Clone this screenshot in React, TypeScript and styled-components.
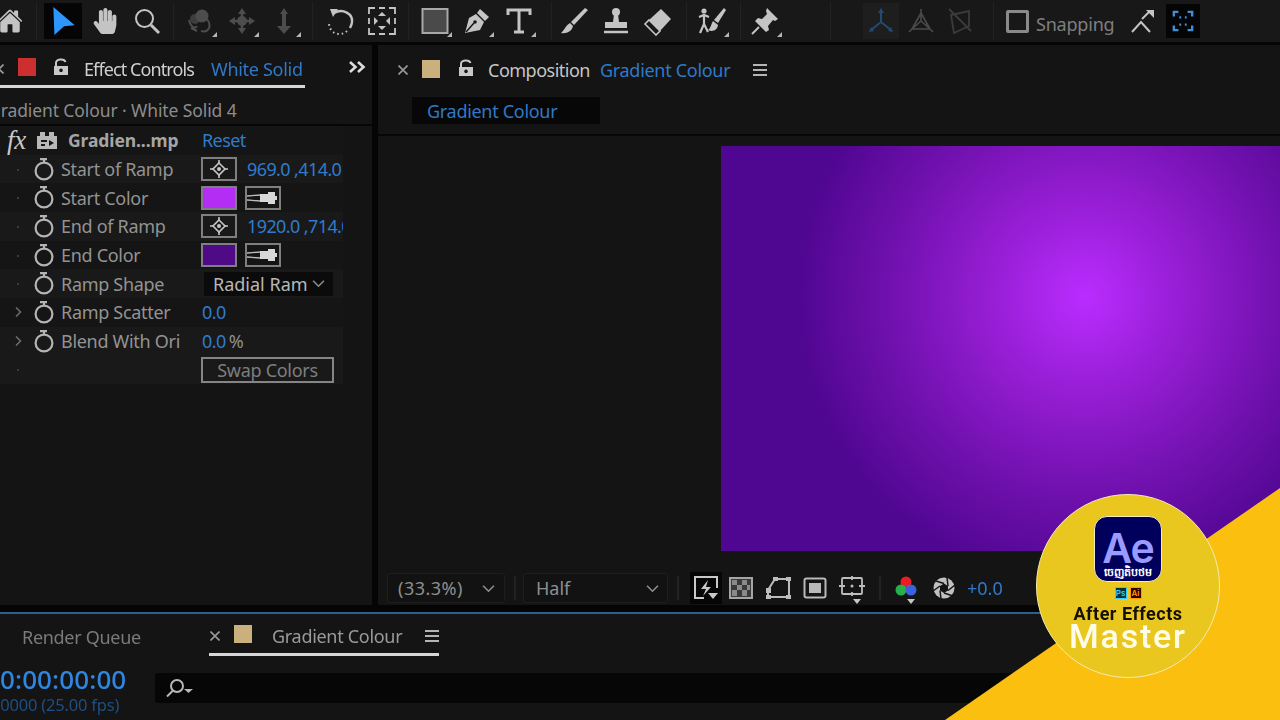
import React, {FC} from 'react';
import styled, {createGlobalStyle} from "styled-components";
import {FaHandPaper} from "react-icons/fa";
import {IoHome} from "react-icons/io5";

const GlobalStyle = createGlobalStyle`
  html, body {
    margin: 0;
    padding: 0;
    background: #050505;
  }
`

const Root = styled.div`
  position: relative;
  width: 1280px;
  height: 720px;
  overflow: hidden;
  background: #050505;
  font-family: "Noto Sans", "Open Sans", sans-serif;
`

const Workspace = styled.div`
  width: 1280px;
  height: 720px;
  display: flex;
  flex-direction: column;
  filter: blur(0.6px);
`

const Toolbar = styled.div`
  height: 42px;
  margin-bottom: 3px;
  flex-shrink: 0;
  display: flex;
  align-items: center;
  background: #181818;
  color: #bdbdbd;
`

const Group = styled.div<{$w: number, $pad?: number, $last?: boolean}>`
  width: ${props => props.$w}px;
  height: 38px;
  flex-shrink: 0;
  display: flex;
  align-items: center;
  box-sizing: border-box;
  padding-left: ${props => props.$pad ?? 0}px;
  border-right: ${props => props.$last ? "none" : "1px solid #222222"};
`

const Tool = styled.div<{$w?: number, $fill?: string, $dim?: boolean}>`
  position: relative;
  width: ${props => props.$w ?? 42}px;
  height: 36px;
  flex-shrink: 0;
  box-sizing: border-box;
  padding: 0 2px;
  display: flex;
  align-items: center;
  justify-content: center;
  background-clip: content-box;
  background-color: ${props => props.$fill ?? "transparent"};
  color: ${props => props.$dim ? "#4d4d4d" : "#c4c4c4"};

  svg {
    flex-shrink: 0;
  }
`

const Corner = styled.span`
  position: absolute;
  right: 4px;
  bottom: 2px;
  width: 5px;
  height: 5px;
  background: #b5b5b5;
  clip-path: polygon(100% 0, 100% 100%, 0 100%);
`

const SnapBox = styled.span`
  width: 23px;
  height: 23px;
  margin: 0 7px 0 12px;
  box-sizing: border-box;
  border: 3px solid #8a8a8a;
  border-radius: 2px;
  flex-shrink: 0;
`

const SnapText = styled.span`
  font-size: 18px;
  width: 92px;
  padding-top: 5px;
  letter-spacing: -0.2px;
  color: #7f7f7f;
`

const FocusBox = styled.div`
  width: 34px;
  height: 34px;
  margin-left: 10px;
  display: flex;
  align-items: center;
  justify-content: center;
  background: #050505;
  color: #3f8ed8;
`

const Main = styled.div`
  height: 560px;
  flex-shrink: 0;
  display: flex;
  gap: 6px;
`

const EffectPanel = styled.div`
  width: 372px;
  flex-shrink: 0;
  overflow: hidden;
  background: #141414;
`

const PanelHead = styled.div`
  position: relative;
`

const TabBar = styled.div`
  height: 43px;
  width: 305px;
  padding-top: 7px;
  display: flex;
  align-items: center;
  box-sizing: border-box;
  border-bottom: 3px solid #d6d6d6;
  font-size: 18px;
  white-space: nowrap;
  color: #d0d0d0;
`

const TabTitle = styled.span`
  letter-spacing: -0.9px;
`

const More = styled.span`
  position: absolute;
  right: 6px;
  top: 15px;
  color: #dcdcdc;
  display: flex;
`

const CloseMark = styled.svg<{$x?: number}>`
  width: 10px;
  height: 10px;
  flex-shrink: 0;
  margin-left: ${props => props.$x ?? 0}px;
  stroke: #9a9a9a;
  stroke-width: 1.6;
`

const Swatch = styled.span<{$bg: string, $x: number, $y?: number}>`
  width: 18px;
  height: 18px;
  flex-shrink: 0;
  margin-left: ${props => props.$x}px;
  margin-top: ${props => props.$y ?? 0}px;
  background: ${props => props.$bg};
`

const LockWrap = styled.span<{$x: number, $w: number}>`
  width: ${props => props.$w}px;
  margin-left: ${props => props.$x}px;
  margin-top: -4px;
  flex-shrink: 0;
  display: flex;
  color: #c8c8c8;
`

const Blue = styled.span<{$x?: number}>`
  margin-left: ${props => props.$x ?? 0}px;
  letter-spacing: -0.3px;
  color: #2f79c8;
`

const Crumb = styled.div`
  height: 38px;
  box-sizing: border-box;
  padding: 10px 0 0 0;
  border-bottom: 2px solid #060606;
  font-size: 17.5px;
  letter-spacing: -0.1px;
  line-height: 24px;
  white-space: nowrap;
  color: #8c8c8c;
  text-indent: -12px;
`

const Rows = styled.div`
  width: 343px;
`

const Row = styled.div<{$odd?: boolean}>`
  display: grid;
  grid-template-columns: 34px 27px 140px 142px;
  height: 28.7px;
  align-items: center;
  background: ${props => props.$odd ? "#191919" : "#151515"};
  font-size: 18px;
  letter-spacing: -0.3px;
  white-space: nowrap;
  color: #939393;
`

const Twirl = styled.span`
  display: flex;
  justify-content: center;
  padding-left: 1px;
  color: #6f6f6f;
`

const Dot = styled.span`
  width: 2px;
  height: 2px;
  margin-top: 1px;
  background: #3a3a3a;
`

const Watch = styled.span`
  display: flex;
  color: #b4b4b4;
`

const Label = styled.span`
  overflow: hidden;
`

const EffectName = styled.span`
  grid-column: 3;
  font-size: 17.5px;
  font-weight: 700;
  letter-spacing: -0.1px;
  color: #a5a5a5;
  margin-left: 7px;
`

const FxCell = styled.span`
  grid-column: 1 / span 2;
  display: flex;
  align-items: center;
  padding-left: 7px;
  gap: 8px;
  color: #b8b8b8;
`

const FxText = styled.span`
  font-family: "Liberation Serif", serif;
  font-style: italic;
  font-size: 27px;
  line-height: 27px;
  width: 21px;
  color: #c8c8c8;
`

const ValueCell = styled.div`
  display: flex;
  align-items: center;
  overflow: hidden;
  gap: 8px;
`

const IconBox = styled.span<{$bg?: string}>`
  width: 36px;
  height: 24px;
  flex-shrink: 0;
  box-sizing: border-box;
  display: flex;
  align-items: center;
  justify-content: center;
  border: 2px solid #7f7f7f;
  background: ${props => props.$bg ?? "transparent"};
  color: #c6c6c6;
`

const Num = styled.span<{$x?: number}>`
  margin-left: ${props => props.$x ?? 1}px;
  margin-top: -1px;
  letter-spacing: -0.6px;
  color: #2f7ccc;
`

const Suffix = styled.span`
  margin-left: -5px;
  color: #8f8f8f;
`

const Dropdown = styled.div`
  width: 129px;
  height: 24px;
  margin-left: 3px;
  box-sizing: border-box;
  padding-left: 9px;
  display: flex;
  align-items: center;
  gap: 4px;
  letter-spacing: 0;
  background: #0b0b0b;
  color: #b8b8b8;

  svg {
    color: #8a8a8a;
  }
`

const SwapButton = styled.div`
  width: 133px;
  height: 26px;
  box-sizing: border-box;
  border: 2px solid #858585;
  display: flex;
  align-items: center;
  justify-content: center;
  font-size: 18px;
  color: #7e7e7e;
`

const Viewer = styled.div`
  flex: 1;
  display: flex;
  flex-direction: column;
  background: #141414;
`

const ViewerHead = styled.div`
  height: 50px;
  flex-shrink: 0;
  display: flex;
  align-items: center;
  font-size: 18px;
  letter-spacing: -0.5px;
  white-space: nowrap;
  color: #c6c6c6;
`

const MenuIcon = styled.svg<{$x: number}>`
  width: 14px;
  height: 12px;
  margin-left: ${props => props.$x}px;
  flex-shrink: 0;
  stroke: #b5b5b5;
  stroke-width: 2;
`

const SubTabs = styled.div`
  height: 41px;
  flex-shrink: 0;
  box-sizing: border-box;
  border-bottom: 2px solid #060606;
  padding-left: 34px;
`

const SubTab = styled.div`
  width: 188px;
  height: 27px;
  margin-top: 2px;
  box-sizing: border-box;
  padding-left: 15px;
  background: #070707;
  font-size: 18px;
  letter-spacing: -0.3px;
  line-height: 29px;
  color: #2f79c8;
`

const Stage = styled.div`
  height: 430px;
  flex-shrink: 0;
  box-sizing: border-box;
  padding: 10px 0 0 343px;
`

const Canvas = styled.div`
  width: 559px;
  height: 405px;
  background: radial-gradient(circle 290px at 364px 151px, #b92dff 0%, #9a1fd8 30%, #7412b2 64%, #4f0690 100%);
`

const ViewerBar = styled.div`
  height: 39px;
  flex-shrink: 0;
  box-sizing: border-box;
  display: flex;
  align-items: center;
  padding: 5px 0 0 9px;
  color: #b5b5b5;
`

const Select = styled.div<{$w: number, $pad: number, $track?: number, $end: number}>`
  width: ${props => props.$w}px;
  height: 30px;
  flex-shrink: 0;
  box-sizing: border-box;
  padding: 0 ${props => props.$end}px 0 ${props => props.$pad}px;
  display: flex;
  align-items: center;
  justify-content: space-between;
  border-radius: 3px;
  border: 1px solid #1e1e1e;
  background: #121212;
  font-size: 18px;
  letter-spacing: ${props => props.$track ?? 0}px;
  color: #8f8f8f;
`

const BarTool = styled.div<{$w: number, $active?: boolean}>`
  position: relative;
  width: ${props => props.$w}px;
  height: 32px;
  flex-shrink: 0;
  display: flex;
  align-items: center;
  justify-content: center;
  background: ${props => props.$active ? "#060606" : "transparent"};
`

const BarSep = styled.span<{$x: number, $r: number}>`
  width: 2px;
  height: 24px;
  flex-shrink: 0;
  margin: 0 ${props => props.$r}px 0 ${props => props.$x}px;
  background: #222222;
`

const DownMark = styled.span`
  position: absolute;
  left: 50%;
  bottom: 0;
  margin-left: 1px;
  width: 8px;
  height: 5px;
  background: #c5c5c5;
  clip-path: polygon(0 0, 100% 0, 50% 100%);
`

const Exposure = styled.span`
  font-size: 18px;
  color: #2f79c8;
`

const BlueLine = styled.div`
  height: 2px;
  margin-top: 7px;
  flex-shrink: 0;
  background: #2f5f92;
`

const Timeline = styled.div`
  flex: 1;
  background: #141414;
  overflow: hidden;
`

const TimelineTabs = styled.div`
  height: 42px;
  display: flex;
  align-items: center;
  font-size: 18px;
  letter-spacing: -0.3px;
  white-space: nowrap;
  color: #8f8f8f;
`

const QueueLabel = styled.span`
  margin-left: 22px;
  margin-top: 4px;
  width: 187px;
  flex-shrink: 0;
  color: #7a7a7a;
`

const CompTab = styled.div`
  width: 230px;
  height: 42px;
  flex-shrink: 0;
  box-sizing: border-box;
  padding-top: 4px;
  display: flex;
  align-items: center;
  border-bottom: 3px solid #d6d6d6;
`

const CompTitle = styled.span`
  margin-left: 20px;
  color: #9a9a9a;
`

const TimeRow = styled.div`
  display: flex;
  align-items: flex-start;
  padding-top: 8px;
`

const TimeColumn = styled.div`
  width: 155px;
  flex-shrink: 0;
  overflow: hidden;
`

const TimeCode = styled.div`
  font-size: 26px;
  font-weight: 500;
  line-height: 30px;
  letter-spacing: 0.1px;
  color: #2f86e0;
`

const Fps = styled.div`
  font-size: 16.5px;
  line-height: 22px;
  margin-left: -9px;
  letter-spacing: -0.2px;
  white-space: nowrap;
  color: #1f4f82;
`

const Search = styled.div`
  flex: 1;
  height: 30px;
  margin-top: 9px;
  box-sizing: border-box;
  padding-left: 10px;
  display: flex;
  align-items: center;
  border-radius: 3px;
  background: #060606;
  color: #b8b8b8;
`

const YellowCorner = styled.div`
  position: absolute;
  left: 945px;
  top: 488px;
  width: 335px;
  height: 232px;
  background: #fbbf10;
  clip-path: polygon(0 100%, 100% 0, 100% 100%);
`

const Badge = styled.div`
  position: absolute;
  left: 1036px;
  top: 494px;
  width: 184px;
  height: 184px;
  box-sizing: border-box;
  padding-top: 21px;
  border-radius: 50%;
  border: 1px solid #f5ecb0;
  background: #eac71e;
  display: flex;
  flex-direction: column;
  align-items: center;
`

const AeTile = styled.div`
  width: 68px;
  height: 66px;
  box-sizing: border-box;
  padding-top: 14px;
  border: 1px solid #f2ecc0;
  border-radius: 13px;
  background: #00005c;
  display: flex;
  flex-direction: column;
  align-items: center;
`

const AeText = styled.span`
  font-family: "Inter", sans-serif;
  font-size: 41px;
  font-weight: 600;
  line-height: 34px;
  letter-spacing: -1px;
  color: #9a9aff;
`

const KhmerText = styled.span`
  font-family: "Noto Sans", "DejaVu Sans", sans-serif;
  font-size: 11px;
  font-weight: 700;
  line-height: 13px;
  white-space: nowrap;
  color: #ffffff;
`

const MiniRow = styled.div`
  display: flex;
  gap: 3px;
  margin-top: 5px;
`

const MiniTile = styled.span<{$bg: string, $fg: string}>`
  width: 12px;
  height: 12px;
  box-sizing: border-box;
  border: 1px solid ${props => props.$fg};
  background: ${props => props.$bg};
  color: ${props => props.$fg};
  font-family: "Inter", sans-serif;
  font-size: 8px;
  line-height: 10px;
  font-weight: 600;
  text-align: center;
  overflow: hidden;
`

const BadgeTitle = styled.span`
  font-family: "Roboto", "Inter", sans-serif;
  margin-top: 5px;
  font-size: 18px;
  line-height: 20px;
  font-weight: 700;
  letter-spacing: 0.5px;
  white-space: nowrap;
  color: #141008;
`

const BadgeMaster = styled.span`
  font-family: "Roboto", "Inter", sans-serif;
  font-size: 34px;
  line-height: 24px;
  font-weight: 500;
  letter-spacing: 1.8px;
  color: #fffde8;
`

type IconProps = {size?: number}

const Svg: FC<IconProps & {children: React.ReactNode, box?: number}> = ({size = 28, box = 28, children}) => (
    <svg width={size} height={size} viewBox={`0 0 ${box} ${box}`} fill="none" stroke="currentColor"
         strokeWidth={2} aria-hidden="true">
        {children}
    </svg>
);

const Arrow = () => (
    <Svg size={30} box={28}>
        <path d="M5 1 L25 18 L15 19 L6 27 Z" fill="#2b97ff" stroke="none"/>
    </Svg>
);

const Magnifier = () => (
    <Svg>
        <circle cx="11.5" cy="11.5" r="8.5"/>
        <path d="M18 18 L26 26" strokeWidth={3}/>
    </Svg>
);

const Roto = () => (
    <Svg size={34} box={34}>
        <circle cx="19" cy="12" r="6.5" fill="currentColor" stroke="none"/>
        <circle cx="12" cy="15" r="5" fill="currentColor" stroke="none" opacity={0.7}/>
        <path d="M6 16 C8 24 12 25 14 22 M8 24 L14 27 M24 15 C29 22 26 29 18 27"/>
    </Svg>
);

const MoveCross = () => (
    <Svg size={32} box={32}>
        <path d="M16 3 L20 9 L12 9 Z M16 29 L20 23 L12 23 Z M3 16 L9 12 L9 20 Z M29 16 L23 12 L23 20 Z" fill="currentColor" stroke="none"/>
        <circle cx="16" cy="16" r="5" fill="currentColor" stroke="none"/>
        <path d="M8 16 H24 M16 8 V24" strokeWidth={2.5}/>
    </Svg>
);

const MoveVertical = () => (
    <Svg size={32} box={32}>
        <path d="M16 3 L20 9 L12 9 Z" fill="currentColor" stroke="none"/>
        <path d="M9 21 L23 21 L16 29 Z" fill="currentColor" stroke="none"/>
        <path d="M16 8 V22" strokeWidth={4}/>
    </Svg>
);

const Rotate = () => (
    <Svg size={30} box={30}>
        <path d="M5 3 L13 3 L8 11 Z" fill="currentColor" stroke="none"/>
        <path d="M9 7 C18 2 28 8 27 16 C27 18 26 20 25 22" strokeWidth={2.4}/>
        <path d="M22 25 C18 29 11 29 7 25 C5 23 4 20 4 17" strokeDasharray="1.5 3"/>
    </Svg>
);

const CameraTarget = () => (
    <Svg size={30} box={30}>
        <path d="M2 8 V2 H8 M22 2 H28 V8 M2 22 V28 H8 M22 28 H28 V22 M12 2 H18 M12 28 H18 M2 12 V18 M28 12 V18" strokeWidth={1.8}/>
        <path d="M15 6 L19 10 H11 Z M15 24 L19 20 H11 Z M7 11 V19 L11 15 Z M23 11 V19 L19 15 Z" fill="currentColor" stroke="none"/>
    </Svg>
);

const ShapeRect = () => (
    <Svg>
        <rect x="1.5" y="2" width="25" height="24" fill="#4a4a4a" stroke="#a8a8a8" strokeWidth={2}/>
    </Svg>
);

const Pen = () => (
    <Svg size={30} box={30}>
        <path d="M18 3 L27 11 L23 15 L15 7 Z" fill="currentColor" stroke="none"/>
        <path d="M14 8 L22 16 L18 24 L3 27 L7 12 Z" fill="currentColor" stroke="none"/>
        <path d="M4 26 L12 17" stroke="#181818" strokeWidth={1.5}/>
        <circle cx="13" cy="16" r="1.8" fill="#181818" stroke="none"/>
    </Svg>
);

const TypeTool = () => (
    <Svg size={28} box={28}>
        <path d="M3 8 V3 H25 V8 M14 3 V25 M9 25 H19" strokeWidth={3}/>
    </Svg>
);

const Brush = () => (
    <Svg size={30} box={30}>
        <path d="M26 2 L29 4 L15 19 L12 16 Z" fill="currentColor" stroke="none"/>
        <path d="M11 17 L14 20 C13 25 8 28 2 27 C5 25 6 20 11 17 Z" fill="currentColor" stroke="none"/>
    </Svg>
);

const Stamp = () => (
    <Svg size={30} box={30}>
        <circle cx="15" cy="6" r="4" fill="currentColor" stroke="none"/>
        <path d="M13 8 H17 L18 16 H12 Z" fill="currentColor" stroke="none"/>
        <path d="M4 16 H26 V22 H4 Z" fill="currentColor" stroke="none"/>
        <path d="M3 26 H27" strokeWidth={2.5}/>
    </Svg>
);

const Eraser = () => (
    <Svg size={30} box={30}>
        <path d="M18 3 L28 13 L17 25 L6 14 Z" fill="currentColor" stroke="none"/>
        <path d="M6 14 L17 25 L13 29 L2 18 Z" stroke="currentColor" strokeWidth={1.6} fill="#181818"/>
    </Svg>
);

const Puppet = () => (
    <Svg size={32} box={32}>
        <circle cx="8" cy="6" r="2.6" fill="currentColor" stroke="none"/>
        <path d="M3 12 L8 10 L13 12 M8 10 V19 L4 28 M8 19 L12 27" strokeWidth={2.2}/>
        <path d="M28 3 L30 5 L22 18 L18 15 Z" fill="currentColor" stroke="none"/>
        <path d="M17 16 L22 20 C21 26 16 27 12 25 C15 23 15 19 17 16 Z" fill="currentColor" stroke="none"/>
    </Svg>
);

const Pin = () => (
    <Svg size={30} box={30}>
        <path d="M17 2 L28 13 L25 15 L23 14 L18 20 L19 24 L16 26 L5 15 L8 12 L12 13 L17 8 L16 5 Z" fill="currentColor" stroke="none"/>
        <path d="M9 21 L2 28" strokeWidth={2}/>
    </Svg>
);

const Axes: FC<{color: string}> = ({color}) => (
    <svg width="30" height="30" viewBox="0 0 30 30" fill="none" stroke={color} strokeWidth={2} aria-hidden="true">
        <path d="M15 16 V5 M15 16 L5 24 M15 16 L25 24"/>
        <path d="M15 2 L18 7 H12 Z M3 26 L5 21 L8 25 Z M27 26 L25 21 L22 25 Z" fill={color} stroke="none"/>
    </svg>
);

const AxesWorld: FC<{color: string}> = ({color}) => (
    <svg width="30" height="30" viewBox="0 0 30 30" fill="none" stroke={color} strokeWidth={2} aria-hidden="true">
        <path d="M15 7 L6 23 H24 Z M15 7 V3 M6 23 L3 26 M24 23 L27 26 M15 7 V15 L6 23 M15 15 L24 23" strokeWidth={1.6}/>
    </svg>
);

const AxesView: FC<{color: string}> = ({color}) => (
    <svg width="30" height="30" viewBox="0 0 30 30" fill="none" stroke={color} strokeWidth={1.8} aria-hidden="true">
        <path d="M4 3 L26 25 M6 9 L24 5 V20 L9 27 Z"/>
    </svg>
);

const SnapIcon = () => (
    <Svg size={26} box={26}>
        <path d="M3 24 L12 14 L21 24" strokeWidth={2}/>
        <path d="M13 11 L20 4" strokeWidth={2}/>
        <path d="M17 2 H25 V10 Z" fill="currentColor" stroke="none"/>
    </Svg>
);

const FocusIcon = () => (
    <Svg size={22} box={24}>
        <path d="M2 7 V2 H7 M17 2 H22 V7 M2 17 V22 H7 M17 22 H22 V17" strokeWidth={2.6}/>
        <path d="M8 8 H10 M14 8 H16 M8 16 H10 M14 16 H16" strokeWidth={2.4}/>
    </Svg>
);

const Lock: FC<{size?: number}> = ({size = 18}) => (
    <svg width={size} height={size} viewBox="0 0 18 18" fill="currentColor" aria-hidden="true">
        <path fillRule="evenodd" d="M2 8 H16 V17 H2 Z M9 10.5 a1.8 1.8 0 1 0 0.01 0 Z"/>
        <path d="M4 8 V5 C4 1 12 0 13.5 4" fill="none" stroke="currentColor" strokeWidth={2}/>
    </svg>
);

const Close: FC<{x?: number}> = ({x}) => (
    <CloseMark $x={x} viewBox="0 0 10 10" aria-hidden="true">
        <path d="M0.5 0.5 L9.5 9.5 M9.5 0.5 L0.5 9.5"/>
    </CloseMark>
);

const Menu: FC<{x: number}> = ({x}) => (
    <MenuIcon $x={x} viewBox="0 0 14 12" aria-hidden="true">
        <path d="M0 1 H14 M0 6 H14 M0 11 H14"/>
    </MenuIcon>
);

const Stopwatch = () => (
    <svg width="20" height="23" viewBox="0 0 20 23" fill="none" stroke="currentColor" strokeWidth={2.2} aria-hidden="true">
        <circle cx="10" cy="13" r="8.4"/>
        <path d="M6 1.2 H13 M10 1.2 V5"/>
    </svg>
);

const Chevron: FC<{dir: "right" | "down", size?: number}> = ({dir, size = 12}) => (
    <svg width={size} height={size} viewBox="0 0 12 12" fill="none" stroke="currentColor" strokeWidth={1.5} aria-hidden="true">
        <path d={dir === "right" ? "M4 1.5 L8.5 6 L4 10.5" : "M1 3.5 L6 8.5 L11 3.5"}/>
    </svg>
);

const DoubleChevron = () => (
    <svg width="18" height="14" viewBox="0 0 18 14" fill="none" stroke="currentColor" strokeWidth={2.6} aria-hidden="true">
        <path d="M2 2 L7.5 7 L2 12 M10 2 L15.5 7 L10 12"/>
    </svg>
);

const Target = () => (
    <svg width="20" height="20" viewBox="0 0 20 20" fill="none" stroke="currentColor" strokeWidth={1.6} aria-hidden="true">
        <path d="M10 1 V4 M10 16 V19 M1 10 H4 M16 10 H19"/>
        <path d="M10 4 L16 10 L10 16 L4 10 Z"/>
        <circle cx="10" cy="10" r="2" fill="currentColor" stroke="none"/>
    </svg>
);

const Eyedropper = () => (
    <svg width="32" height="14" viewBox="0 0 32 14" fill="none" aria-hidden="true">
        <path d="M0 5 L14 4 M0 9 L14 10" stroke="#bdbdbd" strokeWidth={1.3}/>
        <path d="M13 3 H21 V1 H28 V5 H30 V9 H28 V13 H21 V11 H13 Z" fill="#d8d8d8"/>
    </svg>
);

const LayerIcon = () => (
    <svg width="22" height="20" viewBox="0 0 22 20" fill="currentColor" aria-hidden="true">
        <path fillRule="evenodd" d="M1 6 H4 V2 H9 V6 H13 V2 H18 V6 H21 V19 H1 Z M5 10 V12 H11 V10 Z M5 14 V16 H9 V14 Z M13 10 V16 L18 13 Z"/>
    </svg>
);

const FastPreview = () => (
    <svg width="26" height="26" viewBox="0 0 26 26" fill="none" stroke="#c8c8c8" strokeWidth={2} aria-hidden="true">
        <path d="M11 23 H2 V2 H24 V13"/>
        <path d="M15 5 L8 14 H13 L10 21 L18 12 H13 Z" fill="#c8c8c8" stroke="none"/>
        <path d="M15 18 H25 L20 24 Z" fill="#c8c8c8" stroke="none"/>
    </svg>
);

const Checker = () => (
    <svg width="24" height="22" viewBox="0 0 24 22" aria-hidden="true">
        <rect x="1" y="1" width="22" height="20" fill="#3a3a3a" stroke="#a5a5a5" strokeWidth={2}/>
        <path d="M3 3 H8 V8 H3 Z M13 3 H18 V8 H13 Z M8 8 H13 V13 H8 Z M18 8 H21 V13 H18 Z M3 13 H8 V19 H3 Z M13 13 H18 V19 H13 Z" fill="#8a8a8a"/>
    </svg>
);

const MaskPath = () => (
    <svg width="26" height="24" viewBox="0 0 26 24" fill="none" stroke="#bdbdbd" strokeWidth={2} aria-hidden="true">
        <path d="M10 3 H24 V21 H3 V14 Z"/>
        <path d="M1 12 H6 V17 H1 Z M8 1 H13 V5 H8 Z M21 1 H26 V5 H21 Z M21 19 H26 V23 H21 Z M1 19 H6 V23 H1 Z" fill="#bdbdbd" stroke="none"/>
    </svg>
);

const SafeBox = () => (
    <svg width="24" height="22" viewBox="0 0 24 22" aria-hidden="true">
        <rect x="1.5" y="1.5" width="21" height="19" rx="2" fill="none" stroke="#b8b8b8" strokeWidth={2}/>
        <rect x="6" y="6" width="12" height="10" fill="#b8b8b8"/>
    </svg>
);

const Guides = () => (
    <svg width="26" height="24" viewBox="0 0 26 24" fill="none" stroke="#bdbdbd" strokeWidth={1.8} aria-hidden="true">
        <rect x="3" y="2" width="20" height="16" rx="1"/>
        <path d="M0 10 H6 M20 10 H26 M13 0 V4 M13 16 V20"/>
        <circle cx="13" cy="10" r="1.5" fill="#bdbdbd" stroke="none"/>
    </svg>
);

const Channels = () => (
    <svg width="24" height="26" viewBox="0 0 24 26" aria-hidden="true">
        <circle cx="12" cy="7" r="5.5" fill="#e81d25"/>
        <circle cx="7" cy="15" r="5.5" fill="#27b04a"/>
        <circle cx="17" cy="15" r="5.5" fill="#3a62e0"/>
    </svg>
);

const Shutter = () => (
    <svg width="24" height="24" viewBox="0 0 24 24" aria-hidden="true">
        <circle cx="12" cy="12" r="10.5" fill="#c0c0c0"/>
        <path d="M12 7.5 L16 10 V14.5 L12 17 L8 14.5 V10 Z" fill="#141414"/>
        <path d="M12 7.5 L4 5 M16 10 L15 1.5 M16 14.5 L23 9 M12 17 L21 20 M8 14.5 L9 23 M8 10 L1 15"
              fill="none" stroke="#141414" strokeWidth={1.5}/>
    </svg>
);

const SearchIcon = () => (
    <svg width="30" height="20" viewBox="0 0 30 20" fill="none" stroke="currentColor" strokeWidth={2} aria-hidden="true">
        <circle cx="12" cy="8" r="6"/>
        <path d="M8 12.5 L2 18.5"/>
        <path d="M19 11 H28 L23.5 15 Z" fill="currentColor" stroke="none"/>
    </svg>
);

type EffectRow = {
    label: string,
    twirl?: boolean,
    value: React.ReactNode
}

const effectRows: EffectRow[] = [
    {
        label: "Start of Ramp",
        value: <><IconBox><Target/></IconBox><Num $x={2}>969.0 ,414.0</Num></>
    },
    {
        label: "Start Color",
        value: <><IconBox $bg="#b32df5"/><IconBox><Eyedropper/></IconBox></>
    },
    {
        label: "End of Ramp",
        value: <><IconBox><Target/></IconBox><Num $x={2}>1920.0 ,714.0</Num></>
    },
    {
        label: "End Color",
        value: <><IconBox $bg="#4f0a86"/><IconBox><Eyedropper/></IconBox></>
    },
    {
        label: "Ramp Shape",
        value: <Dropdown>Radial Ram<Chevron dir="down" size={13}/></Dropdown>
    },
    {label: "Ramp Scatter", twirl: true, value: <Num>0.0</Num>},
    {label: "Blend With Ori", twirl: true, value: <><Num>0.0</Num><Suffix>%</Suffix></>},
];

const App: FC = () => (
    <Root>
        <GlobalStyle/>
        <Workspace>
            <Toolbar>
                <Group $w={37}>
                    <Tool $w={20}><IoHome size={26}/></Tool>
                </Group>
                <Group $w={137} $pad={5}>
                    <Tool $fill="#050505"><Arrow/></Tool>
                    <Tool><FaHandPaper size={26}/></Tool>
                    <Tool><Magnifier/></Tool>
                </Group>
                <Group $w={139} $pad={5}>
                    <Tool $dim><Roto/><Corner/></Tool>
                    <Tool $dim><MoveCross/><Corner/></Tool>
                    <Tool $dim><MoveVertical/><Corner/></Tool>
                </Group>
                <Group $w={96} $pad={6}>
                    <Tool><Rotate/></Tool>
                    <Tool><CameraTarget/></Tool>
                </Group>
                <Group $w={143} $pad={5}>
                    <Tool><ShapeRect/><Corner/></Tool>
                    <Tool><Pen/><Corner/></Tool>
                    <Tool><TypeTool/><Corner/></Tool>
                </Group>
                <Group $w={135} $pad={1}>
                    <Tool><Brush/></Tool>
                    <Tool><Stamp/></Tool>
                    <Tool><Eraser/></Tool>
                </Group>
                <Group $w={54} $pad={4}>
                    <Tool><Puppet/><Corner/></Tool>
                </Group>
                <Group $w={90} $pad={3}>
                    <Tool><Pin/><Corner/></Tool>
                </Group>
                <Group $w={163} $pad={30}>
                    <Tool $w={40} $fill="#1e1e1e"><Axes color="#234a70"/></Tool>
                    <Tool $w={40} $dim><AxesWorld color="#4a4a4a"/></Tool>
                    <Tool $w={38} $dim><AxesView color="#3c3c3c"/></Tool>
                </Group>
                <Group $w={257} $last>
                    <SnapBox/>
                    <SnapText>Snapping</SnapText>
                    <Tool $w={28}><SnapIcon/></Tool>
                    <FocusBox><FocusIcon/></FocusBox>
                </Group>
            </Toolbar>

            <Main>
                <EffectPanel>
                    <PanelHead>
                        <TabBar>
                            <Close x={-6}/>
                            <Swatch $bg="#cc2f2f" $x={14} $y={-3}/>
                            <LockWrap $x={16} $w={32}><Lock/></LockWrap>
                            <TabTitle>Effect Controls</TabTitle>
                            <Blue $x={17}>White Solid</Blue>
                        </TabBar>
                        <More><DoubleChevron/></More>
                    </PanelHead>
                    <Crumb>Gradient Colour · White Solid 4</Crumb>
                    <Rows>
                        <Row>
                            <FxCell>
                                <FxText>fx</FxText>
                                <LayerIcon/>
                            </FxCell>
                            <EffectName>Gradien...mp</EffectName>
                            <ValueCell><Num>Reset</Num></ValueCell>
                        </Row>
                        {effectRows.map((row, i) => (
                            <Row key={row.label} $odd={i % 2 === 0}>
                                <Twirl>{row.twirl ? <Chevron dir="right"/> : <Dot/>}</Twirl>
                                <Watch><Stopwatch/></Watch>
                                <Label>{row.label}</Label>
                                <ValueCell>{row.value}</ValueCell>
                            </Row>
                        ))}
                        <Row $odd>
                            <Twirl><Dot/></Twirl>
                            <span/>
                            <span/>
                            <SwapButton>Swap Colors</SwapButton>
                        </Row>
                    </Rows>
                </EffectPanel>

                <Viewer>
                    <ViewerHead>
                        <Close x={20}/>
                        <Swatch $bg="#c9b07d" $x={14} $y={-3}/>
                        <LockWrap $x={17} $w={31}><Lock/></LockWrap>
                        Composition
                        <Blue $x={10}>Gradient Colour</Blue>
                        <Menu x={23}/>
                    </ViewerHead>
                    <SubTabs>
                        <SubTab>Gradient Colour</SubTab>
                    </SubTabs>
                    <Stage>
                        <Canvas/>
                    </Stage>
                    <ViewerBar>
                        <Select $w={118} $pad={10} $end={9} $track={0.5}>(33.3%)<Chevron dir="down" size={13}/></Select>
                        <BarSep $x={9} $r={7}/>
                        <Select $w={145} $pad={12} $end={8}>Half<Chevron dir="down" size={13}/></Select>
                        <BarSep $x={9} $r={11}/>
                        <BarTool $w={32} $active><FastPreview/></BarTool>
                        <BarTool $w={37}><Checker/></BarTool>
                        <BarTool $w={37}><MaskPath/></BarTool>
                        <BarTool $w={38}><SafeBox/></BarTool>
                        <BarTool $w={36}><Guides/><DownMark/></BarTool>
                        <BarSep $x={9} $r={10}/>
                        <BarTool $w={30}><Channels/><DownMark/></BarTool>
                        <BarTool $w={46}><Shutter/></BarTool>
                        <Exposure>+0.0</Exposure>
                    </ViewerBar>
                </Viewer>
            </Main>

            <BlueLine/>

            <Timeline>
                <TimelineTabs>
                    <QueueLabel>Render Queue</QueueLabel>
                    <CompTab>
                        <Close x={1}/>
                        <Swatch $bg="#c9b07d" $x={14} $y={-3}/>
                        <CompTitle>Gradient Colour</CompTitle>
                        <Menu x={23}/>
                    </CompTab>
                </TimelineTabs>
                <TimeRow>
                    <TimeColumn>
                        <TimeCode>0:00:00:00</TimeCode>
                        <Fps>00000 (25.00 fps)</Fps>
                    </TimeColumn>
                    <Search><SearchIcon/></Search>
                </TimeRow>
            </Timeline>
        </Workspace>

        <YellowCorner/>
        <Badge>
            <AeTile>
                <AeText>Ae</AeText>
                <KhmerText>ចេញតិបថម</KhmerText>
            </AeTile>
            <MiniRow>
                <MiniTile $bg="#06303a" $fg="#2fd0ff">Ps</MiniTile>
                <MiniTile $bg="#330000" $fg="#ff9a00">Ai</MiniTile>
            </MiniRow>
            <BadgeTitle>After Effects</BadgeTitle>
            <BadgeMaster>Master</BadgeMaster>
        </Badge>
    </Root>
);

export default App;
